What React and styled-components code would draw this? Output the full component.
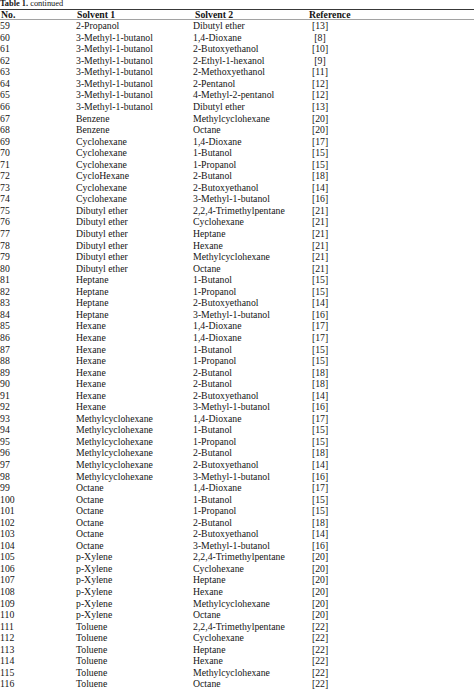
import React from "react";
import styled, { createGlobalStyle } from "styled-components";

const Global = createGlobalStyle`
  html, body { margin: 0; padding: 0; background: #fff; }
  body { font-family: "Liberation Serif", "Times New Roman", serif; color: #151515; overflow: hidden; }
`;

const rows = [
  [59, "2-Propanol", "Dibutyl ether", 13],
  [60, "3-Methyl-1-butanol", "1,4-Dioxane", 8],
  [61, "3-Methyl-1-butanol", "2-Butoxyethanol", 10],
  [62, "3-Methyl-1-butanol", "2-Ethyl-1-hexanol", 9],
  [63, "3-Methyl-1-butanol", "2-Methoxyethanol", 11],
  [64, "3-Methyl-1-butanol", "2-Pentanol", 12],
  [65, "3-Methyl-1-butanol", "4-Methyl-2-pentanol", 12],
  [66, "3-Methyl-1-butanol", "Dibutyl ether", 13],
  [67, "Benzene", "Methylcyclohexane", 20],
  [68, "Benzene", "Octane", 20],
  [69, "Cyclohexane", "1,4-Dioxane", 17],
  [70, "Cyclohexane", "1-Butanol", 15],
  [71, "Cyclohexane", "1-Propanol", 15],
  [72, "CycloHexane", "2-Butanol", 18],
  [73, "Cyclohexane", "2-Butoxyethanol", 14],
  [74, "Cyclohexane", "3-Methyl-1-butanol", 16],
  [75, "Dibutyl ether", "2,2,4-Trimethylpentane", 21],
  [76, "Dibutyl ether", "Cyclohexane", 21],
  [77, "Dibutyl ether", "Heptane", 21],
  [78, "Dibutyl ether", "Hexane", 21],
  [79, "Dibutyl ether", "Methylcyclohexane", 21],
  [80, "Dibutyl ether", "Octane", 21],
  [81, "Heptane", "1-Butanol", 15],
  [82, "Heptane", "1-Propanol", 15],
  [83, "Heptane", "2-Butoxyethanol", 14],
  [84, "Heptane", "3-Methyl-1-butanol", 16],
  [85, "Hexane", "1,4-Dioxane", 17],
  [86, "Hexane", "1,4-Dioxane", 17],
  [87, "Hexane", "1-Butanol", 15],
  [88, "Hexane", "1-Propanol", 15],
  [89, "Hexane", "2-Butanol", 18],
  [90, "Hexane", "2-Butanol", 18],
  [91, "Hexane", "2-Butoxyethanol", 14],
  [92, "Hexane", "3-Methyl-1-butanol", 16],
  [93, "Methylcyclohexane", "1,4-Dioxane", 17],
  [94, "Methylcyclohexane", "1-Butanol", 15],
  [95, "Methylcyclohexane", "1-Propanol", 15],
  [96, "Methylcyclohexane", "2-Butanol", 18],
  [97, "Methylcyclohexane", "2-Butoxyethanol", 14],
  [98, "Methylcyclohexane", "3-Methyl-1-butanol", 16],
  [99, "Octane", "1,4-Dioxane", 17],
  [100, "Octane", "1-Butanol", 15],
  [101, "Octane", "1-Propanol", 15],
  [102, "Octane", "2-Butanol", 18],
  [103, "Octane", "2-Butoxyethanol", 14],
  [104, "Octane", "3-Methyl-1-butanol", 16],
  [105, "p-Xylene", "2,2,4-Trimethylpentane", 20],
  [106, "p-Xylene", "Cyclohexane", 20],
  [107, "p-Xylene", "Heptane", 20],
  [108, "p-Xylene", "Hexane", 20],
  [109, "p-Xylene", "Methylcyclohexane", 20],
  [110, "p-Xylene", "Octane", 20],
  [111, "Toluene", "2,2,4-Trimethylpentane", 22],
  [112, "Toluene", "Cyclohexane", 22],
  [113, "Toluene", "Heptane", 22],
  [114, "Toluene", "Hexane", 22],
  [115, "Toluene", "Methylcyclohexane", 22],
  [116, "Toluene", "Octane", 22],
];

const Page = styled.div`
  width: 474px;
  display: flex;
  flex-direction: column;
`;

const Caption = styled.div`
  height: 8.5px;
  font-size: 8.4px;
  line-height: 7px;
  white-space: nowrap;
  border-bottom: 1.8px solid #383838;
  b { font-weight: bold; }
`;

const Row = styled.div`
  display: grid;
  grid-template-columns: 76px 117px 115px 1fr;
  height: ${(p) => (p.$head ? "9.7px" : "11.55px")};
  line-height: ${(p) => (p.$head ? "9.7px" : "11.55px")};
  font-size: 9.75px;
  font-weight: ${(p) => (p.$head ? "bold" : "normal")};
  white-space: nowrap;
  border-bottom: ${(p) => (p.$head ? "1.3px solid #a2a2a2" : "none")};
`;

const Cell = styled.div`
  padding-left: ${(p) => p.$pad || 0}px;
`;

const RefCell = styled.div`
  width: 24px;
  text-align: center;
`;

export default function App() {
  return (
    <Page>
      <Global />
      <Caption>
        <b>Table 1.</b> continued
      </Caption>
      <Row $head>
        <Cell $pad={1}>No.</Cell>
        <Cell $pad={1}>Solvent 1</Cell>
        <Cell $pad={2}>Solvent 2</Cell>
        <Cell $pad={1}>Reference</Cell>
      </Row>
      {rows.map(([n, a, b, r]) => (
        <Row key={n}>
          <Cell>{n}</Cell>
          <Cell>{a}</Cell>
          <Cell>{b}</Cell>
          <RefCell>[{r}]</RefCell>
        </Row>
      ))}
    </Page>
  );
}
